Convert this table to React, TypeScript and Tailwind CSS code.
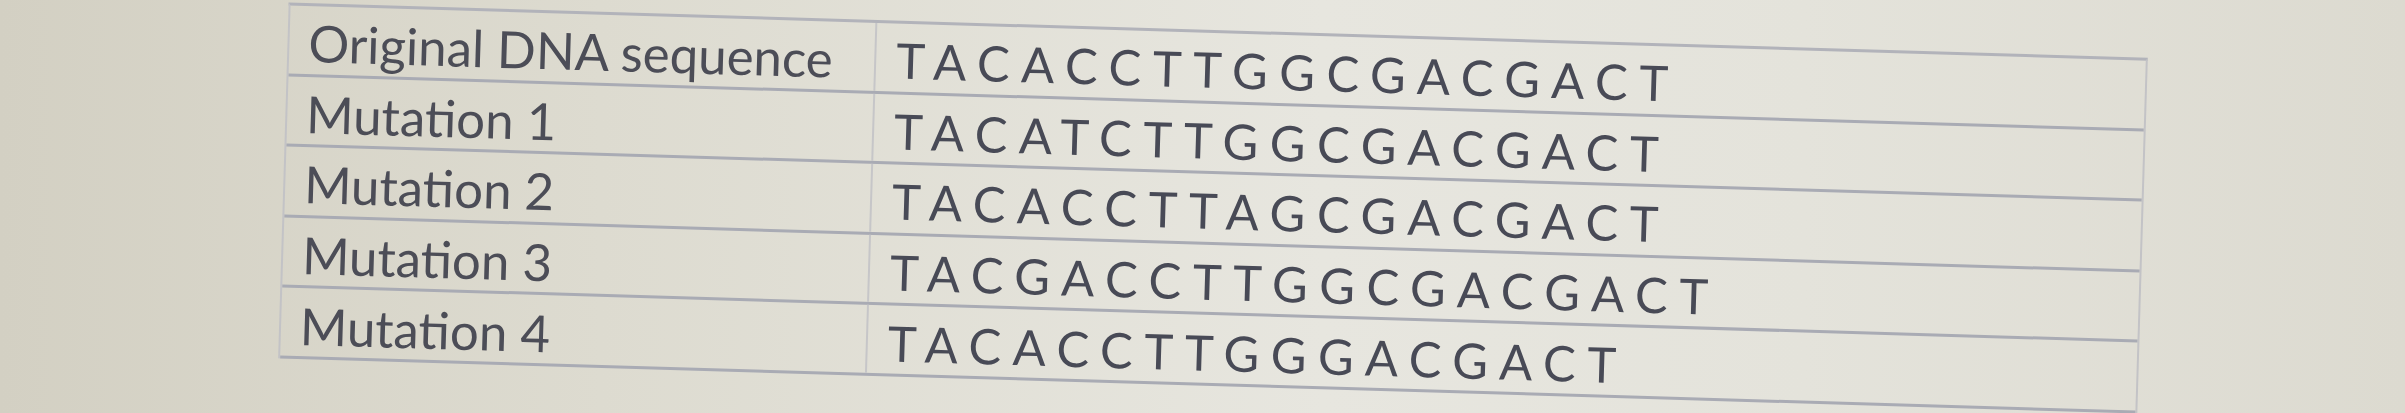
const rows = [
  { label: "Original DNA sequence", seq: "TACACCTTGGCGACGACT" },
  { label: "Mutation 1", seq: "TACATCTTGGCGACGACT" },
  { label: "Mutation 2", seq: "TACACCTTAGCGACGACT" },
  { label: "Mutation 3", seq: "TACGACCTTGGCGACGACT" },
  { label: "Mutation 4", seq: "TACACCTTGGGACGACT" },
];

export default function App() {
  return (
    <div className="relative h-[413px] w-[2405px] overflow-hidden bg-[linear-gradient(90deg,#d3d0c3_0%,#dddbd0_25%,#e7e6df_55%,#e4e3db_75%,#dcdad0_100%)] font-['Lato','Liberation_Sans',sans-serif]">
      <div className="ml-[283px] mt-[30px] w-[1860px] rotate-[1.7deg] border-x-2 border-t-[3px] border-x-[#c3c3c6] border-t-[#b2b3ba]">
        {rows.map((r) => (
          <div
            key={r.label}
            className="grid h-[70.6px] grid-cols-[587px_1fr] border-b-[3px] border-[#a9abb4]"
          >
            <div className="flex items-center border-r-2 border-[#c6c6c8] pl-[19px] pt-[6px] text-[51px] leading-none text-[#4c4d57]">
              {r.label}
            </div>
            <div className="flex items-center pl-[20px] pt-[6px] text-[49px] leading-none tracking-[11.5px] text-[#484a56]">
              {r.seq}
            </div>
          </div>
        ))}
      </div>
    </div>
  );
}
